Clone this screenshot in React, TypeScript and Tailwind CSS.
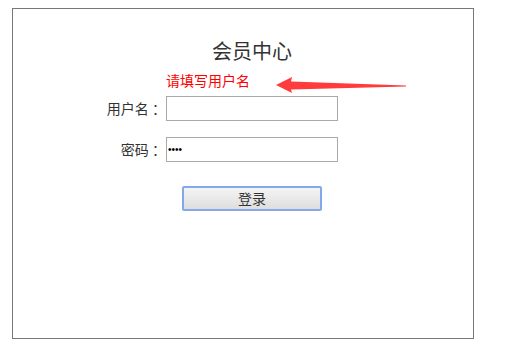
import React from "react";

export default function App() {
  return (
    <div
      className="w-[514px] h-[350px] bg-white pl-[12px] pt-[8px]"
      style={{ fontFamily: '"Noto Sans CJK SC", "Noto Sans", sans-serif' }}
    >
      <div className="relative w-[462px] h-[331px] border border-[#777777] bg-white">
        <div className="pt-[29px] pl-[199px] text-[20px] leading-[26px] text-[#333]">会员中心</div>
        <div className="mt-[7px] pl-[153px] text-[14px] leading-[18px] text-[#ff0000]">请填写用户名</div>
        <div className="mt-[7px] flex items-center">
          <label className="w-[153px] text-right text-[14px] text-[#333]">用户名 ：</label>
          <input className="w-[172px] h-[25px] border border-[#a9a9a9] outline-none px-[2px] text-[13px]" />
        </div>
        <div className="mt-[16px] flex items-center">
          <label className="w-[153px] text-right text-[14px] text-[#333]">密码 ：</label>
          <div className="w-[172px] h-[25px] border border-[#a9a9a9] flex items-center pl-[1px]">
            <span
              className="text-[10px] leading-none text-black"
              style={{ fontFamily: '"Liberation Sans", sans-serif' }}
            >
              ••••
            </span>
          </div>
        </div>
        <div className="mt-[23px] pl-[169px]">
          <button className="w-[140px] h-[25px] border-2 border-[#84a8ea] rounded-[2px] bg-gradient-to-b from-[#f4f4f4] to-[#dedede] text-[14px] text-[#333] leading-[20px]">
            登录
          </button>
        </div>
        <svg
          className="absolute left-[263px] top-[67px]"
          width="132"
          height="18"
          viewBox="0 0 132 18"
        >
          <polygon
            points="0,9 16,1 15,5.5 130,9.5 130,10.5 15,13.5 16,17"
            fill="#ff3b3b"
          />
        </svg>
      </div>
    </div>
  );
}
